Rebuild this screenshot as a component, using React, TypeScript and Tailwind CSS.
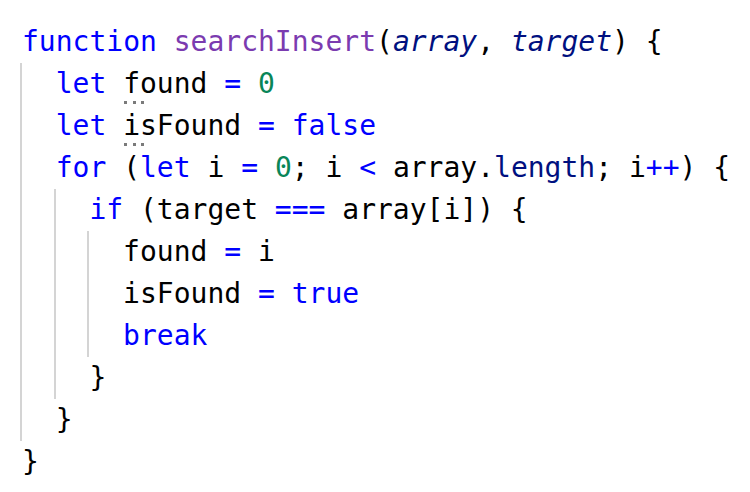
import React from "react";

const K = ({ children }: { children: React.ReactNode }) => (
  <span className="text-[#0000ff]">{children}</span>
);
const N = ({ children }: { children: React.ReactNode }) => (
  <span className="text-[#098658]">{children}</span>
);
const P = ({ children }: { children: React.ReactNode }) => (
  <span className="text-[#001080] italic">{children}</span>
);
const Prop = ({ children }: { children: React.ReactNode }) => (
  <span className="text-[#001080]">{children}</span>
);

const Dotted = ({ ch }: { ch: string }) => (
  <span className="relative">
    {ch}
    <span className="absolute left-0 bottom-[-4px] flex gap-[5.5px] pl-[1px]">
      <span className="block w-[3px] h-[3px] bg-[#7a7a7a]" />
      <span className="block w-[3px] h-[3px] bg-[#7a7a7a]" />
      <span className="block w-[3px] h-[3px] bg-[#7a7a7a]" />
    </span>
  </span>
);

const Line = ({ children, indent = true }: { children: React.ReactNode; indent?: boolean }) => (
  <div className={`h-[42px] leading-[42px] whitespace-pre ${indent ? "pl-[2ch]" : "pl-[2px]"}`}>{children}</div>
);

export default function App() {
  return (
    <div
      className="w-[750px] h-[492px] bg-white text-black pt-[21px] pl-[20px] text-[28px] overflow-hidden"
      style={{ fontFamily: '"DejaVu Sans Mono", Menlo, monospace' }}
    >
      <Line indent={false}>
        <K>function</K> <span className="text-[#7b3bb0]">searchInsert</span>(<P>array</P>, <P>target</P>) {"{"}
      </Line>
      <div className="border-l-2 border-[#d4d4d4]">
        <Line>
          <K>let</K> <Dotted ch="f" />ound <K>=</K> <N>0</N>
        </Line>
        <Line>
          <K>let</K> <Dotted ch="i" />sFound <K>=</K> <K>false</K>
        </Line>
        <Line>
          <K>for</K> (<K>let</K> i <K>=</K> <N>0</N>; i <K>{"<"}</K> array.<Prop>length</Prop>; i<K>++</K>) {"{"}
        </Line>
        <div className="ml-[calc(2ch-2px)] border-l-2 border-[#d4d4d4]">
          <Line>
            <K>if</K> (target <K>===</K> array[i]) {"{"}
          </Line>
          <div className="ml-[calc(2ch-2px)] border-l-2 border-[#d4d4d4]">
            <Line>
              found <K>=</K> i
            </Line>
            <Line>
              isFound <K>=</K> <K>true</K>
            </Line>
            <Line>
              <K>break</K>
            </Line>
          </div>
          <Line>{"}"}</Line>
        </div>
        <Line>{"}"}</Line>
      </div>
      <Line indent={false}>{"}"}</Line>
    </div>
  );
}
